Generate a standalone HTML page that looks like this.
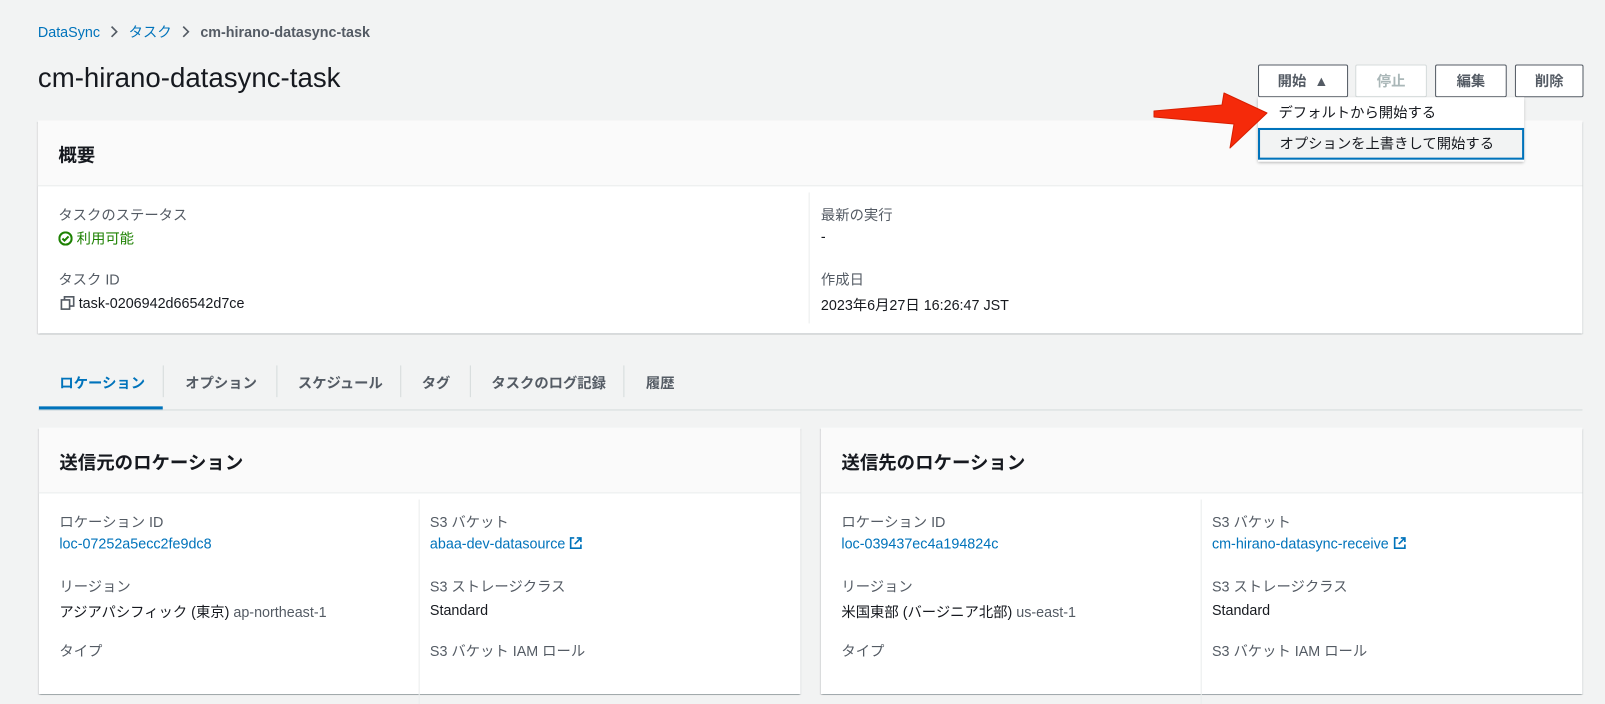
<!DOCTYPE html>
<html><head><meta charset="utf-8"><style>
*{box-sizing:border-box;margin:0;padding:0}
body{width:1605px;height:664px;overflow:hidden;background:#f2f3f3;font-family:"Liberation Sans","Noto Sans CJK JP",sans-serif;color:#16191f;font-size:14px;position:relative}
#wrap{position:absolute;left:0;top:0;width:1568px;height:649px;transform:scale(1.0236);transform-origin:0 0}
.abs{position:absolute}
a{color:#0073bb;text-decoration:none}
.panel{position:absolute;background:#fff;box-shadow:0 1px 1px rgba(0,28,36,.3),1px 1px 1px rgba(0,28,36,.15),-1px 1px 1px rgba(0,28,36,.15)}
.ph{height:64px;border-bottom:1px solid #eaeded;padding:20px 20px;font-size:18px;font-weight:bold;background:#fafafa}
.lbl{color:#545b64;font-size:14px}
.btn{position:absolute;top:63px;height:32px;border:1px solid #545b64;border-radius:2px;background:#fff;font-weight:bold;color:#545b64;font-size:14px;text-align:center;line-height:30px}
.tab{position:absolute;top:364px;font-weight:bold;color:#545b64;font-size:14px}
.sep{position:absolute;top:357px;width:1px;height:31px;background:#d5dbdb}
.chev{display:inline-block;vertical-align:-2px;margin:0 9px}
</style></head><body>
<div id="wrap">
<div class="abs" style="left:37px;top:21px;font-size:14px"><a>DataSync</a><svg class="chev" width="10" height="14" viewBox="0 0 10 14"><path d="M2 2l5 5-5 5" fill="none" stroke="#545b64" stroke-width="1.6"/></svg><a>タスク</a><svg class="chev" width="10" height="14" viewBox="0 0 10 14"><path d="M2 2l5 5-5 5" fill="none" stroke="#545b64" stroke-width="1.6"/></svg><span style="color:#545b64;font-weight:bold">cm-hirano-datasync-task</span></div>
<div class="abs" style="left:37px;top:61px;font-size:27px">cm-hirano-datasync-task</div>
<div class="btn" style="left:1229px;width:88px">開始 &nbsp;▲</div>
<div class="btn" style="left:1324px;width:70px;border-color:#d5dbdb;color:#aab7b8">停止</div>
<div class="btn" style="left:1402px;width:70px">編集</div>
<div class="btn" style="left:1480px;width:67px">削除</div>

<div class="panel" style="left:37px;top:118px;width:1509px;height:208px">
<div class="ph">概要</div>
<div class="abs" style="left:753px;top:70px;width:1px;height:128px;background:#eaeded"></div>
<div class="abs lbl" style="left:20px;top:82px">タスクのステータス</div>
<div class="abs" style="left:20px;top:105px;color:#1d8102"><svg width="14" height="14" style="vertical-align:-2px" viewBox="0 0 14 14"><circle cx="7" cy="7" r="6" fill="none" stroke="#1d8102" stroke-width="2"/><path d="M4 7l2 2 4-4" fill="none" stroke="#1d8102" stroke-width="2"/></svg> 利用可能</div>
<div class="abs lbl" style="left:20px;top:145px">タスク ID</div>
<div class="abs" style="left:22px;top:170px"><svg width="14" height="14" style="vertical-align:-2px" viewBox="0 0 14 14"><rect x="1" y="4" width="8" height="9" fill="none" stroke="#545b64" stroke-width="1.6"/><path d="M4 4V1h9v9h-4" fill="none" stroke="#545b64" stroke-width="1.6"/></svg> task-0206942d66542d7ce</div>
<div class="abs lbl" style="left:765px;top:82px">最新の実行</div>
<div class="abs" style="left:765px;top:105px">-</div>
<div class="abs lbl" style="left:765px;top:145px">作成日</div>
<div class="abs" style="left:765px;top:170px">2023年6月27日 16:26:47 JST</div>
</div>

<div class="tab" style="left:58px;color:#0073bb">ロケーション</div>
<div class="abs" style="left:38px;top:397px;width:121px;height:4px;background:#0073bb"></div>
<div class="sep" style="left:159px"></div>
<div class="tab" style="left:181px">オプション</div>
<div class="sep" style="left:270px"></div>
<div class="tab" style="left:291px">スケジュール</div>
<div class="sep" style="left:391px"></div>
<div class="tab" style="left:412px">タグ</div>
<div class="sep" style="left:459px"></div>
<div class="tab" style="left:480px">タスクのログ記録</div>
<div class="sep" style="left:609px"></div>
<div class="tab" style="left:631px">履歴</div>
<div class="abs" style="left:38px;top:400px;width:1508px;height:1px;background:#d5dbdb"></div>

<div class="panel" style="left:38px;top:418px;width:744px;height:260px">
<div class="ph">送信元のロケーション</div>
<div class="abs" style="left:371px;top:70px;width:1px;height:200px;background:#eaeded"></div>
<div class="abs lbl" style="left:20px;top:82px">ロケーション ID</div>
<div class="abs" style="left:20px;top:105px"><a>loc-07252a5ecc2fe9dc8</a></div>
<div class="abs lbl" style="left:20px;top:145px">リージョン</div>
<div class="abs" style="left:20px;top:170px">アジアパシフィック (東京) <span style="color:#545b64">ap-northeast-1</span></div>
<div class="abs lbl" style="left:20px;top:208px">タイプ</div>
<div class="abs lbl" style="left:382px;top:82px">S3 バケット</div>
<div class="abs" style="left:382px;top:105px"><a>abaa-dev-datasource <svg width="13" height="13" style="vertical-align:-1px" viewBox="0 0 13 13"><path d="M5 1.5H1.5v10h10V8M7.5 1.5h4v4M11.5 1.5l-6 6" fill="none" stroke="#0073bb" stroke-width="1.6"/></svg></a></div>
<div class="abs lbl" style="left:382px;top:145px">S3 ストレージクラス</div>
<div class="abs" style="left:382px;top:170px">Standard</div>
<div class="abs lbl" style="left:382px;top:208px">S3 バケット IAM ロール</div>
</div>

<div class="panel" style="left:802px;top:418px;width:744px;height:260px">
<div class="ph">送信先のロケーション</div>
<div class="abs" style="left:371px;top:70px;width:1px;height:200px;background:#eaeded"></div>
<div class="abs lbl" style="left:20px;top:82px">ロケーション ID</div>
<div class="abs" style="left:20px;top:105px"><a>loc-039437ec4a194824c</a></div>
<div class="abs lbl" style="left:20px;top:145px">リージョン</div>
<div class="abs" style="left:20px;top:170px">米国東部 (バージニア北部) <span style="color:#545b64">us-east-1</span></div>
<div class="abs lbl" style="left:20px;top:208px">タイプ</div>
<div class="abs lbl" style="left:382px;top:82px">S3 バケット</div>
<div class="abs" style="left:382px;top:105px"><a>cm-hirano-datasync-receive <svg width="13" height="13" style="vertical-align:-1px" viewBox="0 0 13 13"><path d="M5 1.5H1.5v10h10V8M7.5 1.5h4v4M11.5 1.5l-6 6" fill="none" stroke="#0073bb" stroke-width="1.6"/></svg></a></div>
<div class="abs lbl" style="left:382px;top:145px">S3 ストレージクラス</div>
<div class="abs" style="left:382px;top:170px">Standard</div>
<div class="abs lbl" style="left:382px;top:208px">S3 バケット IAM ロール</div>
</div>

<div class="abs" style="left:1229px;top:95px;width:260px;height:63px;background:#fff;box-shadow:0 1px 3px rgba(0,0,0,.3)">
<div style="height:30px;line-height:30px;padding-left:20px">デフォルトから開始する</div>
<div style="height:31px;line-height:27px;padding-left:19px;border:2px solid #0073bb;background:#f2f3f3">オプションを上書きして開始する</div>
</div>
</div>
<svg class="abs" style="left:1150px;top:88px" width="125" height="65" viewBox="0 0 125 65"><path d="M4 23 L72 17 L74 5 L117 25 L80 60 L84 36 L4 29 Z" fill="#f52a0a" stroke="#d81e00" stroke-width="1" stroke-linejoin="round"/></svg>
</body></html>
